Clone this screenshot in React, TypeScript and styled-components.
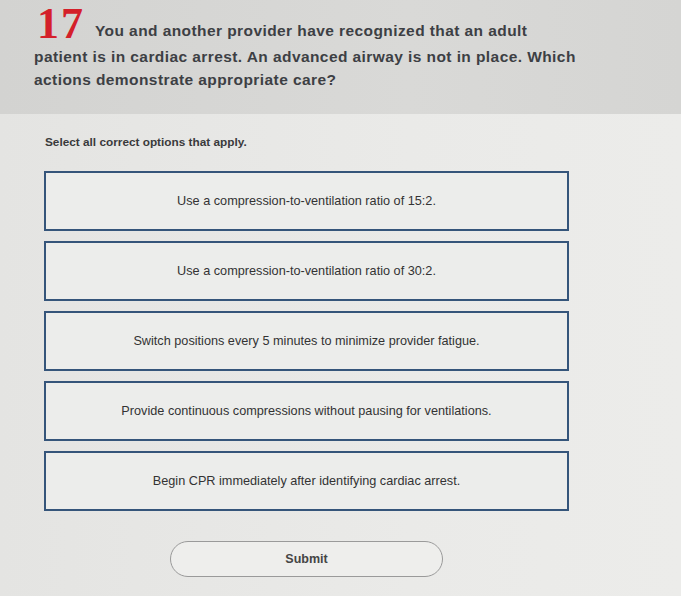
import styled, {createGlobalStyle} from "styled-components";

const OPTIONS = [
  "Use a compression-to-ventilation ratio of 15:2.",
  "Use a compression-to-ventilation ratio of 30:2.",
  "Switch positions every 5 minutes to minimize provider fatigue.",
  "Provide continuous compressions without pausing for ventilations.",
  "Begin CPR immediately after identifying cardiac arrest.",
];

function App() {
  return (
    <Page>
      <GlobalStyle/>
      <Header>
        <Question>
          <Number>17</Number>
          You and another provider have recognized that an adult<br/>
          patient is in cardiac arrest. An advanced airway is not in place. Which<br/>
          actions demonstrate appropriate care?
        </Question>
      </Header>
      <Body>
        <Instruction>Select all correct options that apply.</Instruction>
        <OptionList>
          {OPTIONS.map((text) =>
            <Option key={text} type="button">{text}</Option>
          )}
        </OptionList>
        <SubmitRow>
          <SubmitButton type="button">Submit</SubmitButton>
        </SubmitRow>
      </Body>
    </Page>
  );
}

export default App;

const GlobalStyle = createGlobalStyle`
  html, body {
    margin: 0;
    padding: 0;
    background: #e9e9e7;
  }
`;

const Page = styled.div`
  width: 681px;
  height: 596px;
  overflow: hidden;
  font-family: "Liberation Sans", Arial, sans-serif;
  background: linear-gradient(90deg, #e4e4e2 0%, #eaeae8 60%, #ececea 100%);
`;

const Header = styled.div`
  height: 114px;
  box-sizing: border-box;
  padding: 3px 0 0 34px;
  background: linear-gradient(90deg, #d3d3d1 0%, #d9d9d7 60%, #d5d5d3 100%);
`;

const Question = styled.p`
  margin: 0;
  font-size: 15.5px;
  font-weight: bold;
  line-height: 23px;
  color: #3d3f44;
  letter-spacing: 0.42px;
  white-space: nowrap;
`;

const Number = styled.span`
  display: inline-block;
  font-family: "Liberation Serif", "Times New Roman", serif;
  font-size: 44px;
  font-weight: bold;
  line-height: 42px;
  vertical-align: -2px;
  color: #d4202a;
  letter-spacing: 2px;
  margin: 0 10px 0 3px;
`;

const Body = styled.div`
  padding: 21px 112px 0 44px;
`;

const Instruction = styled.div`
  font-size: 11.8px;
  font-weight: bold;
  color: #3a3a3c;
  padding-left: 1px;
  margin-bottom: 22px;
`;

const OptionList = styled.div`
  display: flex;
  flex-direction: column;
  gap: 10px;
`;

const Option = styled.button`
  height: 60px;
  width: 525px;
  box-sizing: border-box;
  border: 2px solid #35557a;
  background: #ecedeb;
  font-family: "Liberation Sans", Arial, sans-serif;
  font-size: 12.7px;
  color: #333333;
  text-align: center;
  padding: 0;
  cursor: pointer;
`;

const SubmitRow = styled.div`
  padding-top: 30px;
  padding-left: 126px;
`;

const SubmitButton = styled.button`
  width: 273px;
  height: 36px;
  border: 1.5px solid #9a9a9a;
  border-radius: 18px;
  background: #eeeeec;
  font-family: "Liberation Sans", Arial, sans-serif;
  font-size: 12.5px;
  font-weight: bold;
  color: #454545;
  cursor: pointer;
`;
